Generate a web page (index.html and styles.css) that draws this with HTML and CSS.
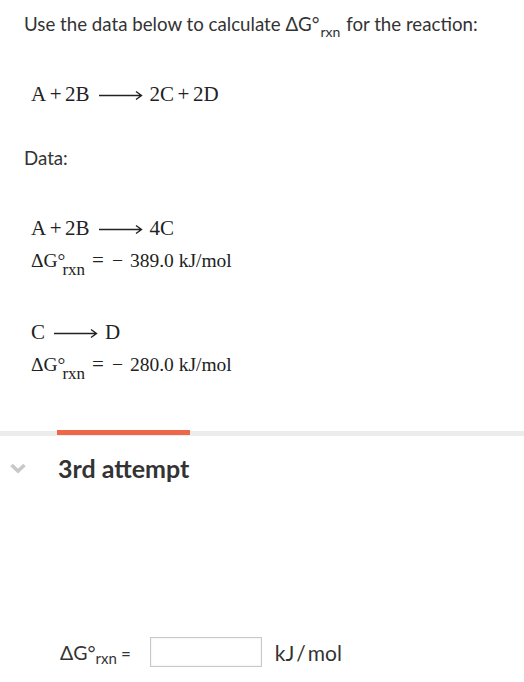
FILE: index.html
```html
<!DOCTYPE html>
<html>
<head>
<meta charset="utf-8">
<link rel="stylesheet" href="styles.css">
</head>
<body>
<div class="question">
  <p class="prompt">Use the data below to calculate <span class="dg">ΔG°</span><sub class="psub">rxn</sub> for the reaction:</p>
  <div class="eq main-eq">A<span class="op">+</span>2B<svg class="arrow" width="44" height="12" viewBox="0 0 44 12"><path d="M0 6.5H42M37 2.5L42.5 6.5L37 10.5" fill="none" stroke="#222" stroke-width="1.4"/></svg>2C<span class="op">+</span>2D</div>
  <p class="label">Data:</p>
  <div class="eq eq1">A<span class="op">+</span>2B<svg class="arrow" width="44" height="12" viewBox="0 0 44 12"><path d="M0 6.5H42M37 2.5L42.5 6.5L37 10.5" fill="none" stroke="#222" stroke-width="1.4"/></svg>4C</div>
  <div class="eq dgline">ΔG°<sub class="msub">rxn</sub><span class="eqs">=</span>−<span class="num">389.0 kJ/mol</span></div>
  <div class="eq eq2">C<svg class="arrow" width="44" height="12" viewBox="0 0 44 12"><path d="M0 6.5H42M37 2.5L42.5 6.5L37 10.5" fill="none" stroke="#222" stroke-width="1.4"/></svg>D</div>
  <div class="eq dgline">ΔG°<sub class="msub">rxn</sub><span class="eqs">=</span>−<span class="num">280.0 kJ/mol</span></div>
</div>
<div class="progress"><div class="progress-fill"></div></div>
<div class="attempt">
  <svg class="chev" width="18" height="12" viewBox="0 0 18 12"><path d="M2.5 3L9 9L15.5 3" fill="none" stroke="#c8c8c8" stroke-width="3.6"/></svg>
  <h2 class="attempt-title">3rd attempt</h2>
</div>
<div class="answer">
  <span class="ans-label"><span class="adg">ΔG°</span><sub class="asub">rxn</sub><span class="aeq">=</span></span>
  <input class="ans-input" type="text">
  <span class="unit">kJ<span class="slash">/</span>mol</span>
</div>
</body>
</html>
```
FILE: styles.css
```css
body {
  margin: 0;
  background: #fff;
  color: #333;
  font-family: Lato, "Open Sans", sans-serif;
}
.question {
  padding: 0 0 0 24px;
}
.prompt {
  margin: 0;
  padding-top: 12px;
  font-size: 18.7px;
  line-height: 24px;
}
.dg {
  font-family: Lato, "DejaVu Sans", sans-serif;
}
.psub {
  font-size: 14px;
  vertical-align: -6px;
  line-height: 0;
  margin-left: 1px;
  margin-right: 1px;
}
.eq {
  font-family: "Liberation Serif", serif;
  font-size: 21px;
  color: #222;
  padding-left: 7px;
  line-height: 24px;
}
.op {
  margin: 0 3.5px;
}
.arrow {
  vertical-align: 0px;
  margin: 0 7px 0 9px;
}
.main-eq {
  margin-top: 46px;
}
.label {
  margin: 40px 0 0 0;
  font-size: 18.7px;
  line-height: 24px;
}
.eq1 {
  margin-top: 46px;
}
.dgline {
  margin-top: 8px;
  font-size: 19.5px;
}
.msub {
  font-size: 17px;
  vertical-align: -8px;
  line-height: 0;
  margin-left: -3px;
}
.eqs {
  margin: 0 8px 0 7px;
  font-size: 21px;
}
.num {
  margin-left: 7px;
}
.eq2 {
  margin-top: 47px;
}
.progress {
  margin-top: 54px;
  height: 5px;
  background: #ececec;
  position: relative;
}
.progress-fill {
  position: absolute;
  left: 57px;
  top: -1px;
  width: 133px;
  height: 5px;
  background: #ee6748;
}
.attempt {
  display: flex;
  align-items: center;
  padding-top: 20px;
}
.chev {
  margin-left: 9px;
  margin-right: 31px;
}
.attempt-title {
  margin: 0;
  font-size: 25px;
  font-weight: bold;
  color: #333;
  line-height: 24px;
}
.answer {
  display: flex;
  align-items: center;
  margin-top: 157px;
  padding-left: 60px;
}
.ans-label {
  font-size: 19px;
}
.adg {
  font-size: 19.5px;
}
.asub {
  font-size: 15px;
  vertical-align: -4px;
  line-height: 0;
}
.aeq {
  font-size: 17px;
  margin-left: 4px;
}
.ans-input {
  width: 110px;
  height: 28px;
  margin: 0 0 0 19px;
  padding: 0;
  border: 1px solid #c8c8c8;
  box-shadow: inset 0 0 3px rgba(0,0,0,0.08);
  background: #fff;
}
.unit {
  margin-left: 13px;
  font-size: 21px;
}
.slash {
  margin: 0 2px;
}
```
